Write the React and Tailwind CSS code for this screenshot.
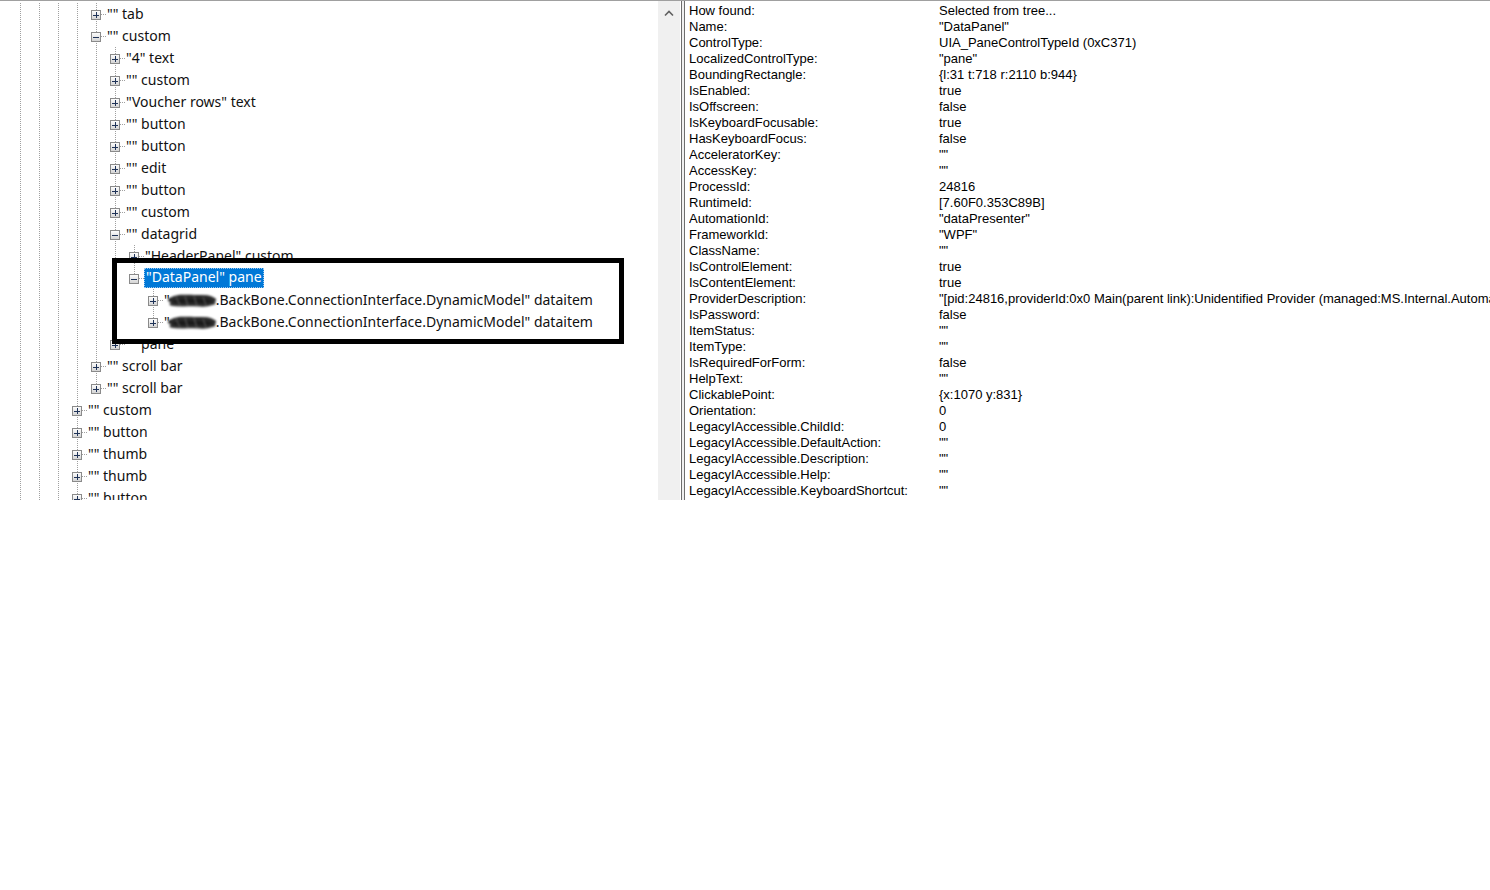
import React from 'react';

const treeRows = [
  { level: 4, label: '"" tab' },
  { level: 4, label: '"" custom', open: true },
  { level: 5, label: '"4" text' },
  { level: 5, label: '"" custom' },
  { level: 5, label: '"Voucher rows" text' },
  { level: 5, label: '"" button' },
  { level: 5, label: '"" button' },
  { level: 5, label: '"" edit' },
  { level: 5, label: '"" button' },
  { level: 5, label: '"" custom' },
  { level: 5, label: '"" datagrid', open: true },
  { level: 6, label: '"HeaderPanel" custom' },
  { level: 6, label: '"DataPanel" pane', open: true, selected: true },
  { level: 7, label: '.BackBone.ConnectionInterface.DynamicModel" dataitem', hidden: true },
  { level: 7, label: '.BackBone.ConnectionInterface.DynamicModel" dataitem', hidden: true },
  { level: 5, label: '"" pane' },
  { level: 4, label: '"" scroll bar' },
  { level: 4, label: '"" scroll bar' },
  { level: 3, label: '"" custom' },
  { level: 3, label: '"" button' },
  { level: 3, label: '"" thumb' },
  { level: 3, label: '"" thumb' },
  { level: 3, label: '"" button' },
];

// rows that go on past the visible area
const allRows = [...treeRows, { level: 3 }, { level: 2 }, { level: 1 }, { level: 0 }];

// is there a later row at this level before the branch closes?
const continues = (from, level) => {
  for (let s = from + 1; s < allRows.length; s++) {
    if (allRows[s].level === level) return true;
    if (allRows[s].level < level) return false;
  }
  return false;
};

const properties = [
  ['How found:', 'Selected from tree...'],
  ['Name:', '"DataPanel"'],
  ['ControlType:', 'UIA_PaneControlTypeId (0xC371)'],
  ['LocalizedControlType:', '"pane"'],
  ['BoundingRectangle:', '{l:31 t:718 r:2110 b:944}'],
  ['IsEnabled:', 'true'],
  ['IsOffscreen:', 'false'],
  ['IsKeyboardFocusable:', 'true'],
  ['HasKeyboardFocus:', 'false'],
  ['AcceleratorKey:', '""'],
  ['AccessKey:', '""'],
  ['ProcessId:', '24816'],
  ['RuntimeId:', '[7.60F0.353C89B]'],
  ['AutomationId:', '"dataPresenter"'],
  ['FrameworkId:', '"WPF"'],
  ['ClassName:', '""'],
  ['IsControlElement:', 'true'],
  ['IsContentElement:', 'true'],
  ['ProviderDescription:', '"[pid:24816,providerId:0x0 Main(parent link):Unidentified Provider (managed:MS.Internal.Automation.ElementProxy, UIAutomationCore.dll)"'],
  ['IsPassword:', 'false'],
  ['ItemStatus:', '""'],
  ['ItemType:', '""'],
  ['IsRequiredForForm:', 'false'],
  ['HelpText:', '""'],
  ['ClickablePoint:', '{x:1070 y:831}'],
  ['Orientation:', '0'],
  ['LegacyIAccessible.ChildId:', '0'],
  ['LegacyIAccessible.DefaultAction:', '""'],
  ['LegacyIAccessible.Description:', '""'],
  ['LegacyIAccessible.Help:', '""'],
  ['LegacyIAccessible.KeyboardShortcut:', '""'],
];

const GuideCell = ({ line }) => (
  <svg width="19" height="22" className="shrink-0" shapeRendering="crispEdges">
    {line && (
      <line x1="9.5" y1="0" x2="9.5" y2="22" stroke="#a0a0a0" strokeDasharray="1 1" />
    )}
  </svg>
);

const ExpanderCell = ({ open, hasNext, id }) => (
  <svg width="19" height="22" className="shrink-0" shapeRendering="crispEdges">
    <defs>
      <linearGradient id={`exp-${id}`} x1="0" y1="0" x2="0" y2="1">
        <stop offset="0" stopColor="#ffffff" />
        <stop offset="1" stopColor="#d2d2d2" />
      </linearGradient>
    </defs>
    <line x1="9.5" y1="0" x2="9.5" y2="7" stroke="#a0a0a0" strokeDasharray="1 1" />
    {hasNext && (
      <line x1="9.5" y1="16" x2="9.5" y2="22" stroke="#a0a0a0" strokeDasharray="1 1" />
    )}
    <line x1="14" y1="11.5" x2="19" y2="11.5" stroke="#a0a0a0" strokeDasharray="1 1" />
    <rect x="4.5" y="7.5" width="9" height="9" fill={`url(#exp-${id})`} stroke="#8a8a8a" />
    <line x1="6" y1="12.5" x2="12" y2="12.5" stroke="#1f3358" />
    {!open && <line x1="9.5" y1="9" x2="9.5" y2="15" stroke="#1f3358" />}
  </svg>
);

const Scribble = () => (
  <svg width="48" height="18" viewBox="0 0 48 18" className="inline-block align-middle -ml-[2px] blur-[0.8px]">
    <ellipse cx="24" cy="9" rx="22" ry="5" fill="#1a1a1a" />
    <path d="M2 8 C10 3, 20 5, 28 5 S40 4, 46 8" stroke="#2a2a2a" strokeWidth="4" fill="none" strokeLinecap="round" />
    <path d="M3 12 C12 14, 24 12, 32 13 S42 12, 46 11" stroke="#333" strokeWidth="3" fill="none" strokeLinecap="round" />
    <path d="M8 5 L12 13 M17 4 L20 14 M26 4 L29 14 M35 5 L38 13" stroke="#555" strokeWidth="1.2" fill="none" />
  </svg>
);

const TreeRow = ({ row, index }) => {
  const guides = [];
  for (let j = 0; j < row.level; j++) {
    guides.push(<GuideCell key={j} line={continues(index, j)} />);
  }

  return (
    <div className="flex h-[22px] items-center">
      {guides}
      <ExpanderCell open={row.open} hasNext={continues(index, row.level)} id={index} />
      {row.hidden ? (
        <span className="whitespace-nowrap px-[1px] h-[20px] leading-[20px]">
          "<Scribble />
          {row.label}
        </span>
      ) : (
        <span
          className={
            row.selected
              ? 'whitespace-nowrap px-[2px] h-[20px] leading-[18px] bg-[#0078d7] text-white outline outline-1 outline-dotted outline-[#9cc8f0] -outline-offset-1'
              : 'whitespace-nowrap px-[1px] h-[20px] leading-[20px]'
          }
        >
          {row.label}
        </span>
      )}
    </div>
  );
};

export default function App() {
  return (
    <div className="relative w-[1490px] h-[890px] bg-white overflow-hidden">
      <div className="flex h-[500px] border-t border-[#a0a0a0]">
        {/* TREE */}
        <div
          className="relative w-[658px] overflow-hidden pt-[2px] pl-[11px] text-[14px] text-[#111]"
          style={{ fontFamily: '"Noto Sans", "Open Sans", sans-serif' }}
        >
          {treeRows.map((row, i) => (
            <TreeRow key={i} row={row} index={i} />
          ))}

          {/* annotation box */}
          <div className="absolute left-[112px] top-[257px] w-[512px] h-[86px] border-[5px] border-black" />
        </div>

        {/* SCROLLBAR */}
        <div className="w-[22px] bg-[#f0f0f0] flex justify-center pt-[9px]">
          <svg width="10" height="7" viewBox="0 0 10 7">
            <path d="M1 5.5 L5 1.5 L9 5.5" stroke="#606060" strokeWidth="1.6" fill="none" />
          </svg>
        </div>
        <div className="w-[1px] bg-white" />
        <div className="w-[4px] border-x border-[#6e6e6e] bg-[#f0f0f0]" />

        {/* PROPERTIES */}
        <div
          className="flex-1 overflow-hidden pt-[2px] pl-[4px] text-[13px] text-black"
          style={{ fontFamily: '"Liberation Sans", Arial, sans-serif' }}
        >
          {properties.map(([label, value]) => (
            <div key={label} className="flex h-[16px] leading-[16px] whitespace-nowrap">
              <div className="w-[250px] shrink-0 overflow-hidden">{label}</div>
              <div>{value}</div>
            </div>
          ))}
        </div>
      </div>
    </div>
  );
}
